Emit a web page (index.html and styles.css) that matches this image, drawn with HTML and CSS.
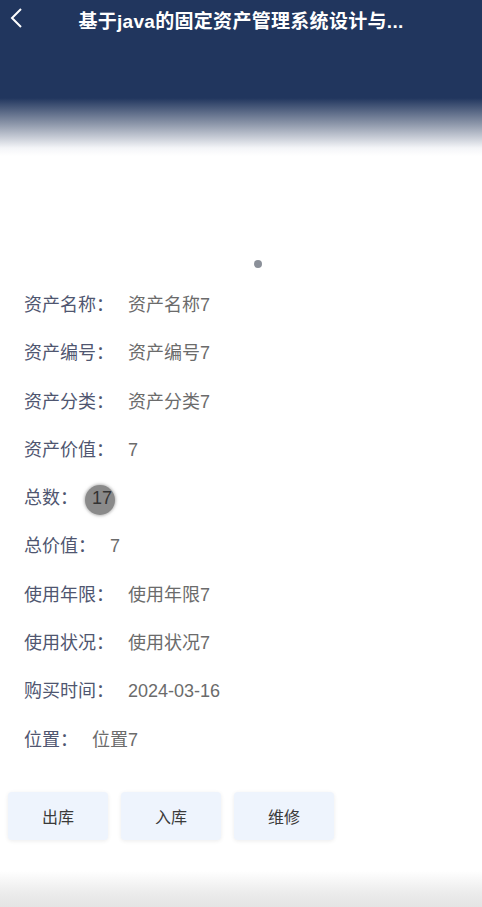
FILE: index.html
```html
<!DOCTYPE html>
<html lang="zh-CN">
<head>
<meta charset="utf-8">
<title>详情</title>
<link rel="stylesheet" href="styles.css">
</head>
<body>
<div class="page">
  <div class="top">
    <div class="navbar">
      <span class="back">
        <svg width="16" height="22" viewBox="0 0 16 22"><polyline points="13,2 4,11 13,20" fill="none" stroke="#fff" stroke-width="2"/></svg>
      </span>
      <div class="title">基于java的固定资产管理系统设计与...</div>
    </div>
    <div class="swiper">
      <div class="dots"><span class="dot"></span></div>
    </div>
  </div>
  <div class="info">
    <div class="row"><span class="label">资产名称：</span><span class="value">资产名称7</span></div>
    <div class="row"><span class="label">资产编号：</span><span class="value">资产编号7</span></div>
    <div class="row"><span class="label">资产分类：</span><span class="value">资产分类7</span></div>
    <div class="row"><span class="label">资产价值：</span><span class="value">7</span></div>
    <div class="row"><span class="label">总数：</span><span class="value touch">17</span></div>
    <div class="row"><span class="label">总价值：</span><span class="value">7</span></div>
    <div class="row"><span class="label">使用年限：</span><span class="value">使用年限7</span></div>
    <div class="row"><span class="label">使用状况：</span><span class="value">使用状况7</span></div>
    <div class="row"><span class="label">购买时间：</span><span class="value">2024-03-16</span></div>
    <div class="row"><span class="label">位置：</span><span class="value">位置7</span></div>
  </div>
  <div class="actions">
    <button class="btn">出库</button>
    <button class="btn">入库</button>
    <button class="btn">维修</button>
  </div>
  <div class="spacer"></div>
  <div class="bottom"></div>
</div>
</body>
</html>
```

FILE: styles.css
```css
* { box-sizing: border-box; }
html, body { margin: 0; padding: 0; background: #fff; }
body {
  font-family: "Liberation Sans", "Noto Sans CJK SC", sans-serif;
  width: 482px;
  height: 907px;
  overflow: hidden;
}
.page {
  display: flex;
  flex-direction: column;
  height: 907px;
}
.top {
  height: 279px;
  background: linear-gradient(to bottom, #21365e 0, #21365e 98px, #8d97aa 124px, #f4f5f8 148px, #ffffff 156px);
  display: flex;
  flex-direction: column;
}
.navbar {
  height: 40px;
  display: flex;
  align-items: center;
  justify-content: center;
  position: relative;
}
.back {
  position: absolute;
  left: 8px;
  top: 7px;
  display: flex;
}
.title {
  color: #fff;
  font-weight: bold;
  font-size: 19px;
  white-space: nowrap;
  margin-top: -2px;
  letter-spacing: 0.3px;
}
.swiper {
  flex: 1;
  display: flex;
  flex-direction: column;
  justify-content: flex-end;
}
.dots {
  display: flex;
  justify-content: center;
  padding-left: 34px;
  padding-bottom: 11px;
}
.dot {
  width: 8px;
  height: 8px;
  border-radius: 50%;
  background: #8b9099;
}
.info {
  padding-left: 24px;
  padding-top: 2px;
}
.row {
  height: 48.3px;
  line-height: 48.3px;
  font-size: 18px;
  white-space: nowrap;
}
.label {
  color: #4f5670;
}
.value {
  color: #6b6b6b;
  margin-left: 14px;
}
.touch {
  position: relative;
  color: #333;
  display: inline-block;
  line-height: 20px;
  z-index: 0;
}
.touch::before {
  content: "";
  position: absolute;
  left: -7px;
  top: -3px;
  width: 30px;
  height: 30px;
  border-radius: 50%;
  background: #8a8a8a;
  box-shadow: 0 0 3px 1px rgba(138,138,138,0.6);
  z-index: -1;
}
.actions {
  display: flex;
  gap: 13px;
  padding-left: 8px;
  margin-top: 28px;
}
.btn {
  width: 100px;
  height: 48px;
  border: none;
  border-radius: 4px;
  background: #eef4fd;
  box-shadow: 0 1px 4px rgba(0,0,0,0.08);
  font-family: "Liberation Sans", "Noto Sans CJK SC", sans-serif;
  font-size: 16px;
  color: #3a3a3a;
  padding: 0;
}
.spacer { flex: 1; }
.bottom {
  height: 36px;
  background: linear-gradient(to bottom, #ffffff 0, #ececec 60%, #e4e4e4 100%);
}
```
